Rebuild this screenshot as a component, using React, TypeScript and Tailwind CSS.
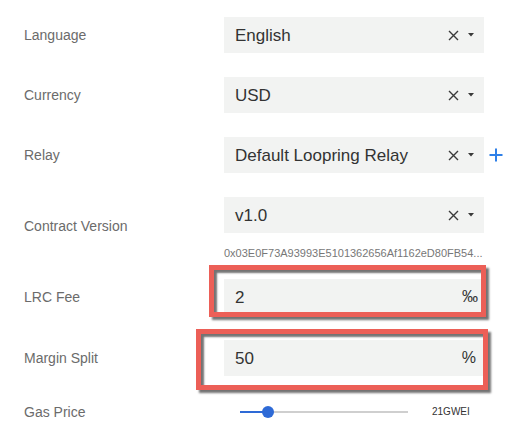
import React from "react";

const font = { fontFamily: '"Liberation Sans", Arial, sans-serif' };

function XIcon() {
  return (
    <svg width="11" height="11" viewBox="0 0 11 11" className="block">
      <path d="M1 1 L10 10 M10 1 L1 10" stroke="#3a3a3a" strokeWidth="1.4" fill="none" />
    </svg>
  );
}

function Caret() {
  return (
    <svg width="6" height="4" viewBox="0 0 6 4" className="block">
      <path d="M0 0 L6 0 L3 3.5 Z" fill="#3a3a3a" />
    </svg>
  );
}

function Select({ value }: { value: string }) {
  return (
    <div className="w-[260px] shrink-0 h-9 bg-[#f2f3f2] flex items-center pl-[11px] pr-[10px]">
      <span className="flex-1 text-[17px] leading-none text-[#333]">{value}</span>
      <div className="flex items-center gap-[9px]">
        <XIcon />
        <Caret />
      </div>
    </div>
  );
}

function Label({ children }: { children: React.ReactNode }) {
  return <div className="w-[224px] shrink-0 pl-6 text-[14px] text-[#6b6b6b] leading-5">{children}</div>;
}

export default function App() {
  return (
    <div style={font} className="w-[511px] h-[436px] bg-white pt-[17px] overflow-hidden">
      <div className="flex items-center h-9">
        <Label>Language</Label>
        <Select value="English" />
      </div>
      <div className="flex items-center h-9 mt-6">
        <Label>Currency</Label>
        <Select value="USD" />
      </div>
      <div className="flex items-center h-9 mt-6">
        <Label>Relay</Label>
        <Select value="Default Loopring Relay" />
        <svg width="14" height="14" viewBox="0 0 14 14" className="ml-[5px] block shrink-0">
          <path d="M7 0.5 V13.5 M0.5 7 H13.5" stroke="#2f80e8" strokeWidth="2" fill="none" />
        </svg>
      </div>
      <div className="flex items-start mt-6">
        <div className="pt-[19px]">
          <Label>Contract Version</Label>
        </div>
        <div className="flex flex-col">
          <Select value="v1.0" />
          <div className="mt-[13px] text-[11px] leading-[14px] text-[#777] w-[260px] whitespace-nowrap">
            0x03E0F73A93993E5101362656Af1162eD80FB54...
          </div>
        </div>
      </div>
      <div className="relative flex items-center h-9 mt-[19px]">
        <Label>LRC Fee</Label>
        <div className="w-[260px] shrink-0 h-9 bg-[#f2f3f2] flex items-center pl-[11px] pr-[6px]">
          <span className="flex-1 text-[17px] leading-none text-[#333]">2</span>
          <span className="text-[16px] leading-none text-[#333]">‰</span>
        </div>
        <div className="absolute left-[209px] top-[-14px] w-[277px] h-[52px] border-[5px] border-[#ec5f57] shadow-[3px_3px_2px_rgba(0,0,0,0.55),inset_3px_3px_2px_rgba(0,0,0,0.55)]" />
      </div>
      <div className="relative flex items-center h-9 mt-[25px]">
        <Label>Margin Split</Label>
        <div className="w-[260px] shrink-0 h-9 bg-[#f2f3f2] flex items-center pl-[11px] pr-[8px]">
          <span className="flex-1 text-[17px] leading-none text-[#333]">50</span>
          <span className="text-[16px] leading-none text-[#333]">%</span>
        </div>
        <div className="absolute left-[196px] top-[-11px] w-[292px] h-[61px] border-[5px] border-[#ec5f57] shadow-[3px_3px_2px_rgba(0,0,0,0.55),inset_3px_3px_2px_rgba(0,0,0,0.55)]" />
      </div>
      <div className="flex items-center h-6 mt-6">
        <Label>Gas Price</Label>
        <div className="ml-4 relative w-[168px] shrink-0 h-3 flex items-center">
          <div className="w-full h-[2px] bg-[#cfcfcf]" />
          <div className="absolute left-0 top-[5px] w-[28px] h-[2px] bg-[#2e6ad6]" />
          <div className="absolute left-[22px] top-0 w-3 h-3 rounded-full bg-[#2e6ad6]" />
        </div>
        <span className="ml-6 text-[10px] leading-none text-[#333]">21GWEI</span>
      </div>
    </div>
  );
}
